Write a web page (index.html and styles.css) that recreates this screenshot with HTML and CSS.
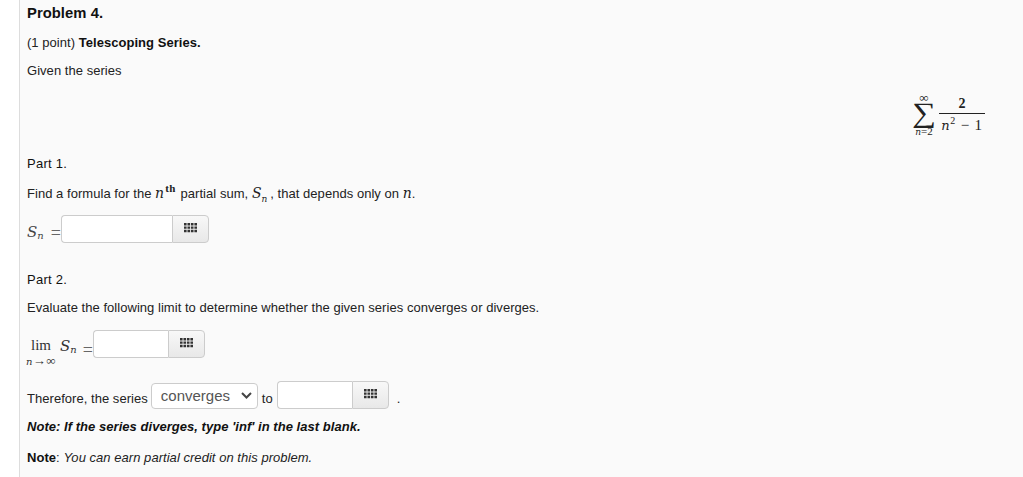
FILE: index.html
```html
<!DOCTYPE html>
<html lang="en">
<head>
<meta charset="utf-8">
<title>Problem 4</title>
<link rel="stylesheet" href="styles.css">
</head>
<body>
<main class="panel">
  <h2 class="title">Problem 4.</h2>
  <p class="line intro">(1 point) <b>Telescoping Series.</b></p>
  <p class="line given">Given the series</p>
  <div class="display">
    <span class="sum">
      <span class="limit inf">∞</span>
      <span class="sigma">∑</span>
      <span class="limit lower"><i class="mi">n</i>=2</span>
    </span>
    <span class="frac">
      <span class="num">2</span>
      <span class="den"><i class="mi">n</i><sup>2</sup> − 1</span>
    </span>
  </div>
  <p class="line part part1">Part 1.</p>
  <p class="line find">Find a formula for the <span class="math"><i class="mi">n</i><sup>th</sup></span> partial sum, <span class="math"><i class="mi">S</i><sub><i class="mi">n</i></sub></span>, that depends only on <span class="math"><i class="mi">n</i></span>.</p>
  <div class="answer row1">
    <span class="math lhs"><span class="sn"><i class="mi">S</i><sub><i class="mi">n</i></sub></span><span class="eq">=</span></span>
    <span class="field wide"></span>
    <span class="btn">
      <svg width="13" height="10" viewBox="0 0 13 10"><path class="grid" d="M0 0h2.600v2.400H0zM3.470 0h2.600v2.400h-2.600zM6.930 0h2.600v2.400h-2.600zM10.400 0h2.600v2.400h-2.600zM0 3.400h2.600v2.400H0zM3.470 3.400h2.600v2.400h-2.600zM6.930 3.400h2.600v2.400h-2.600zM10.400 3.400h2.600v2.400h-2.600zM0 6.800h2.600v2.400H0zM3.470 6.800h2.600v2.400h-2.600zM6.930 6.800h2.600v2.400h-2.600zM10.400 6.800h2.600v2.400h-2.600z"/></svg>
    </span>
  </div>
  <p class="line part part2">Part 2.</p>
  <p class="line evaluate">Evaluate the following limit to determine whether the given series converges or diverges.</p>
  <div class="answer row2">
    <span class="math lim"><span class="limword">lim<small><i class="mi">n</i>→∞</small></span><span class="limS"><span class="sn"><i class="mi">S</i><sub><i class="mi">n</i></sub></span><span class="eq">=</span></span></span>
    <span class="field narrow"></span>
    <span class="btn">
      <svg width="13" height="10" viewBox="0 0 13 10"><path class="grid" d="M0 0h2.600v2.400H0zM3.470 0h2.600v2.400h-2.600zM6.930 0h2.600v2.400h-2.600zM10.400 0h2.600v2.400h-2.600zM0 3.400h2.600v2.400H0zM3.470 3.400h2.600v2.400h-2.600zM6.930 3.400h2.600v2.400h-2.600zM10.400 3.400h2.600v2.400h-2.600zM0 6.800h2.600v2.400H0zM3.470 6.800h2.600v2.400h-2.600zM6.930 6.800h2.600v2.400h-2.600zM10.400 6.800h2.600v2.400h-2.600z"/></svg>
    </span>
  </div>
  <div class="answer row3">
    <span class="rowtext">Therefore, the series</span>
    <span class="select">converges
      <svg width="11" height="7" viewBox="0 0 11 7"><path class="chev" d="M1 1l4.500 4.500L10 1"/></svg>
    </span>
    <span class="rowtext to">to</span>
    <span class="field narrow"></span>
    <span class="btn">
      <svg width="13" height="10" viewBox="0 0 13 10"><path class="grid" d="M0 0h2.600v2.400H0zM3.470 0h2.600v2.400h-2.600zM6.930 0h2.600v2.400h-2.600zM10.400 0h2.600v2.400h-2.600zM0 3.400h2.600v2.400H0zM3.470 3.400h2.600v2.400h-2.600zM6.930 3.400h2.600v2.400h-2.600zM10.400 3.400h2.600v2.400h-2.600zM0 6.800h2.600v2.400H0zM3.470 6.800h2.600v2.400h-2.600zM6.930 6.800h2.600v2.400h-2.600zM10.400 6.800h2.600v2.400h-2.600z"/></svg>
    </span>
    <span class="rowtext dot">.</span>
  </div>
  <p class="line note1"><b><i>Note: If the series diverges, type 'inf' in the last blank.</i></b></p>
  <p class="line note2"><b>Note</b>: <i>You can earn partial credit on this problem.</i></p>
</main>
</body>
</html>
```
FILE: styles.css
```css
html, body { margin: 0; padding: 0; background: #fff; }
body { height: 477px; overflow: hidden; font-family: "Liberation Sans", Arial, sans-serif; color: #222; }
.panel {
  margin-left: 19px; height: 477px; box-sizing: border-box;
  background: #fafafa; border-left: 1px solid #ddd; padding: 5px 38px 0 7px;
  font-size: 13px; letter-spacing: .04px; line-height: 16px;
}
.title { margin: 0; font-size: 14.8px; line-height: 16px; font-weight: bold; color: #111; }
.line { margin: 0; }
.line b { color: #111; }
.intro { margin-top: 14px; }
.given { margin-top: 12px; }
.mi { font-family: "DejaVu Serif", serif; font-style: italic; }
.display { display: flex; justify-content: flex-end; align-items: flex-start; gap: 4px; height: 71px; margin-top: 1px; font-family: "Liberation Serif", serif; color: #222; }
.sum { display: flex; flex-direction: column; align-items: center; width: 22px; margin-top: 14px; }
.limit { font-size: 11px; line-height: 8px; white-space: nowrap; }
.limit .mi { font-size: 9px; }
.inf { font-size: 13px; line-height: 7px; }
.lower { margin-top: 2px; line-height: 9px; }
.sigma { font-size: 28px; line-height: 24px; transform: scaleX(1.2); }
.frac { display: flex; flex-direction: column; align-items: center; width: 46px; margin-top: 15px; }
.num { font-size: 14px; font-weight: bold; line-height: 18px; border-bottom: 1px solid #222; width: 100%; text-align: center; }
.den { font-size: 15px; line-height: 22px; letter-spacing: .8px; white-space: nowrap; }
.den .mi { font-size: 13px; }
.den sup { font-size: 10px; line-height: 0; }
.part { color: #111; letter-spacing: .25px; }
.part1 { margin-top: 5px; }
.find { margin-top: 14px; }
.math { font-family: "Liberation Serif", serif; font-size: 14px; line-height: 0; letter-spacing: 0; }
.math sup { font-size: 11px; font-weight: bold; line-height: 0; margin: 0 1px; letter-spacing: .5px; }
.math sub { font-size: 9px; line-height: 0; margin-right: 3px; }
.answer { display: flex; align-items: center; }
.row1 { height: 28px; margin-top: 13px; }
.lhs { width: 34px; box-sizing: border-box; padding-top: 4px; color: #444; display: flex; align-items: baseline; line-height: 16px; }
.sn { display: inline-block; white-space: nowrap; font-size: 15px; }
.sn sub { font-size: 10px; vertical-align: -2px; margin-right: 0; }
.eq { margin-left: auto; font-size: 18px; color: #666; transform: translateY(2px); }
.field { display: block; height: 28px; box-sizing: border-box; background: #fff; border: 1px solid #ccc; border-right: 0; border-radius: 4px 0 0 4px; }
.wide { width: 111px; }
.narrow { width: 75px; }
.btn { display: flex; align-items: center; justify-content: center; width: 37px; height: 28px; box-sizing: border-box; border: 1px solid #ccc; border-radius: 0 4px 4px 0; background: linear-gradient(#f8f8f8, #e8e8e8); }
.btn svg { margin-bottom: 3px; }
.grid { fill: #333; }
.part2 { margin-top: 29px; }
.evaluate { margin-top: 12px; }
.row2 { height: 36px; margin-top: 14px; align-items: flex-start; }
.lim { display: flex; width: 66px; color: #333; line-height: normal; }
.limword { display: flex; flex-direction: column; align-items: center; width: 28px; font-size: 15px; line-height: 14px; margin-top: 8px; }
.limword small { font-size: 13px; line-height: 9px; margin-top: 4px; white-space: nowrap; letter-spacing: .5px; }
.limword small .mi { font-size: 10px; }
.limS { display: flex; align-items: baseline; flex: 1; margin-left: 5px; margin-top: 5px; white-space: nowrap; height: 20px; line-height: 20px; }
.limS .eq { transform: translateY(5px); }
.row3 { height: 28px; margin-top: 15px; }
.rowtext { margin-top: 8px; }
.select { display: flex; align-items: center; justify-content: space-between; box-sizing: border-box; width: 107px; height: 26px; margin: 2px 0 0 3px; padding: 0 5px 1px 9px; background: #fff; border: 1px solid #ccc; border-radius: 4px; color: #555; font-size: 15px; letter-spacing: 0; }
.chev { fill: none; stroke: #444; stroke-width: 2; }
.to { margin-left: 4px; margin-right: 4px; }
.dot { margin-left: 8px; }
.note1 { margin-top: 10px; }
.note2 { margin-top: 15px; }
```
